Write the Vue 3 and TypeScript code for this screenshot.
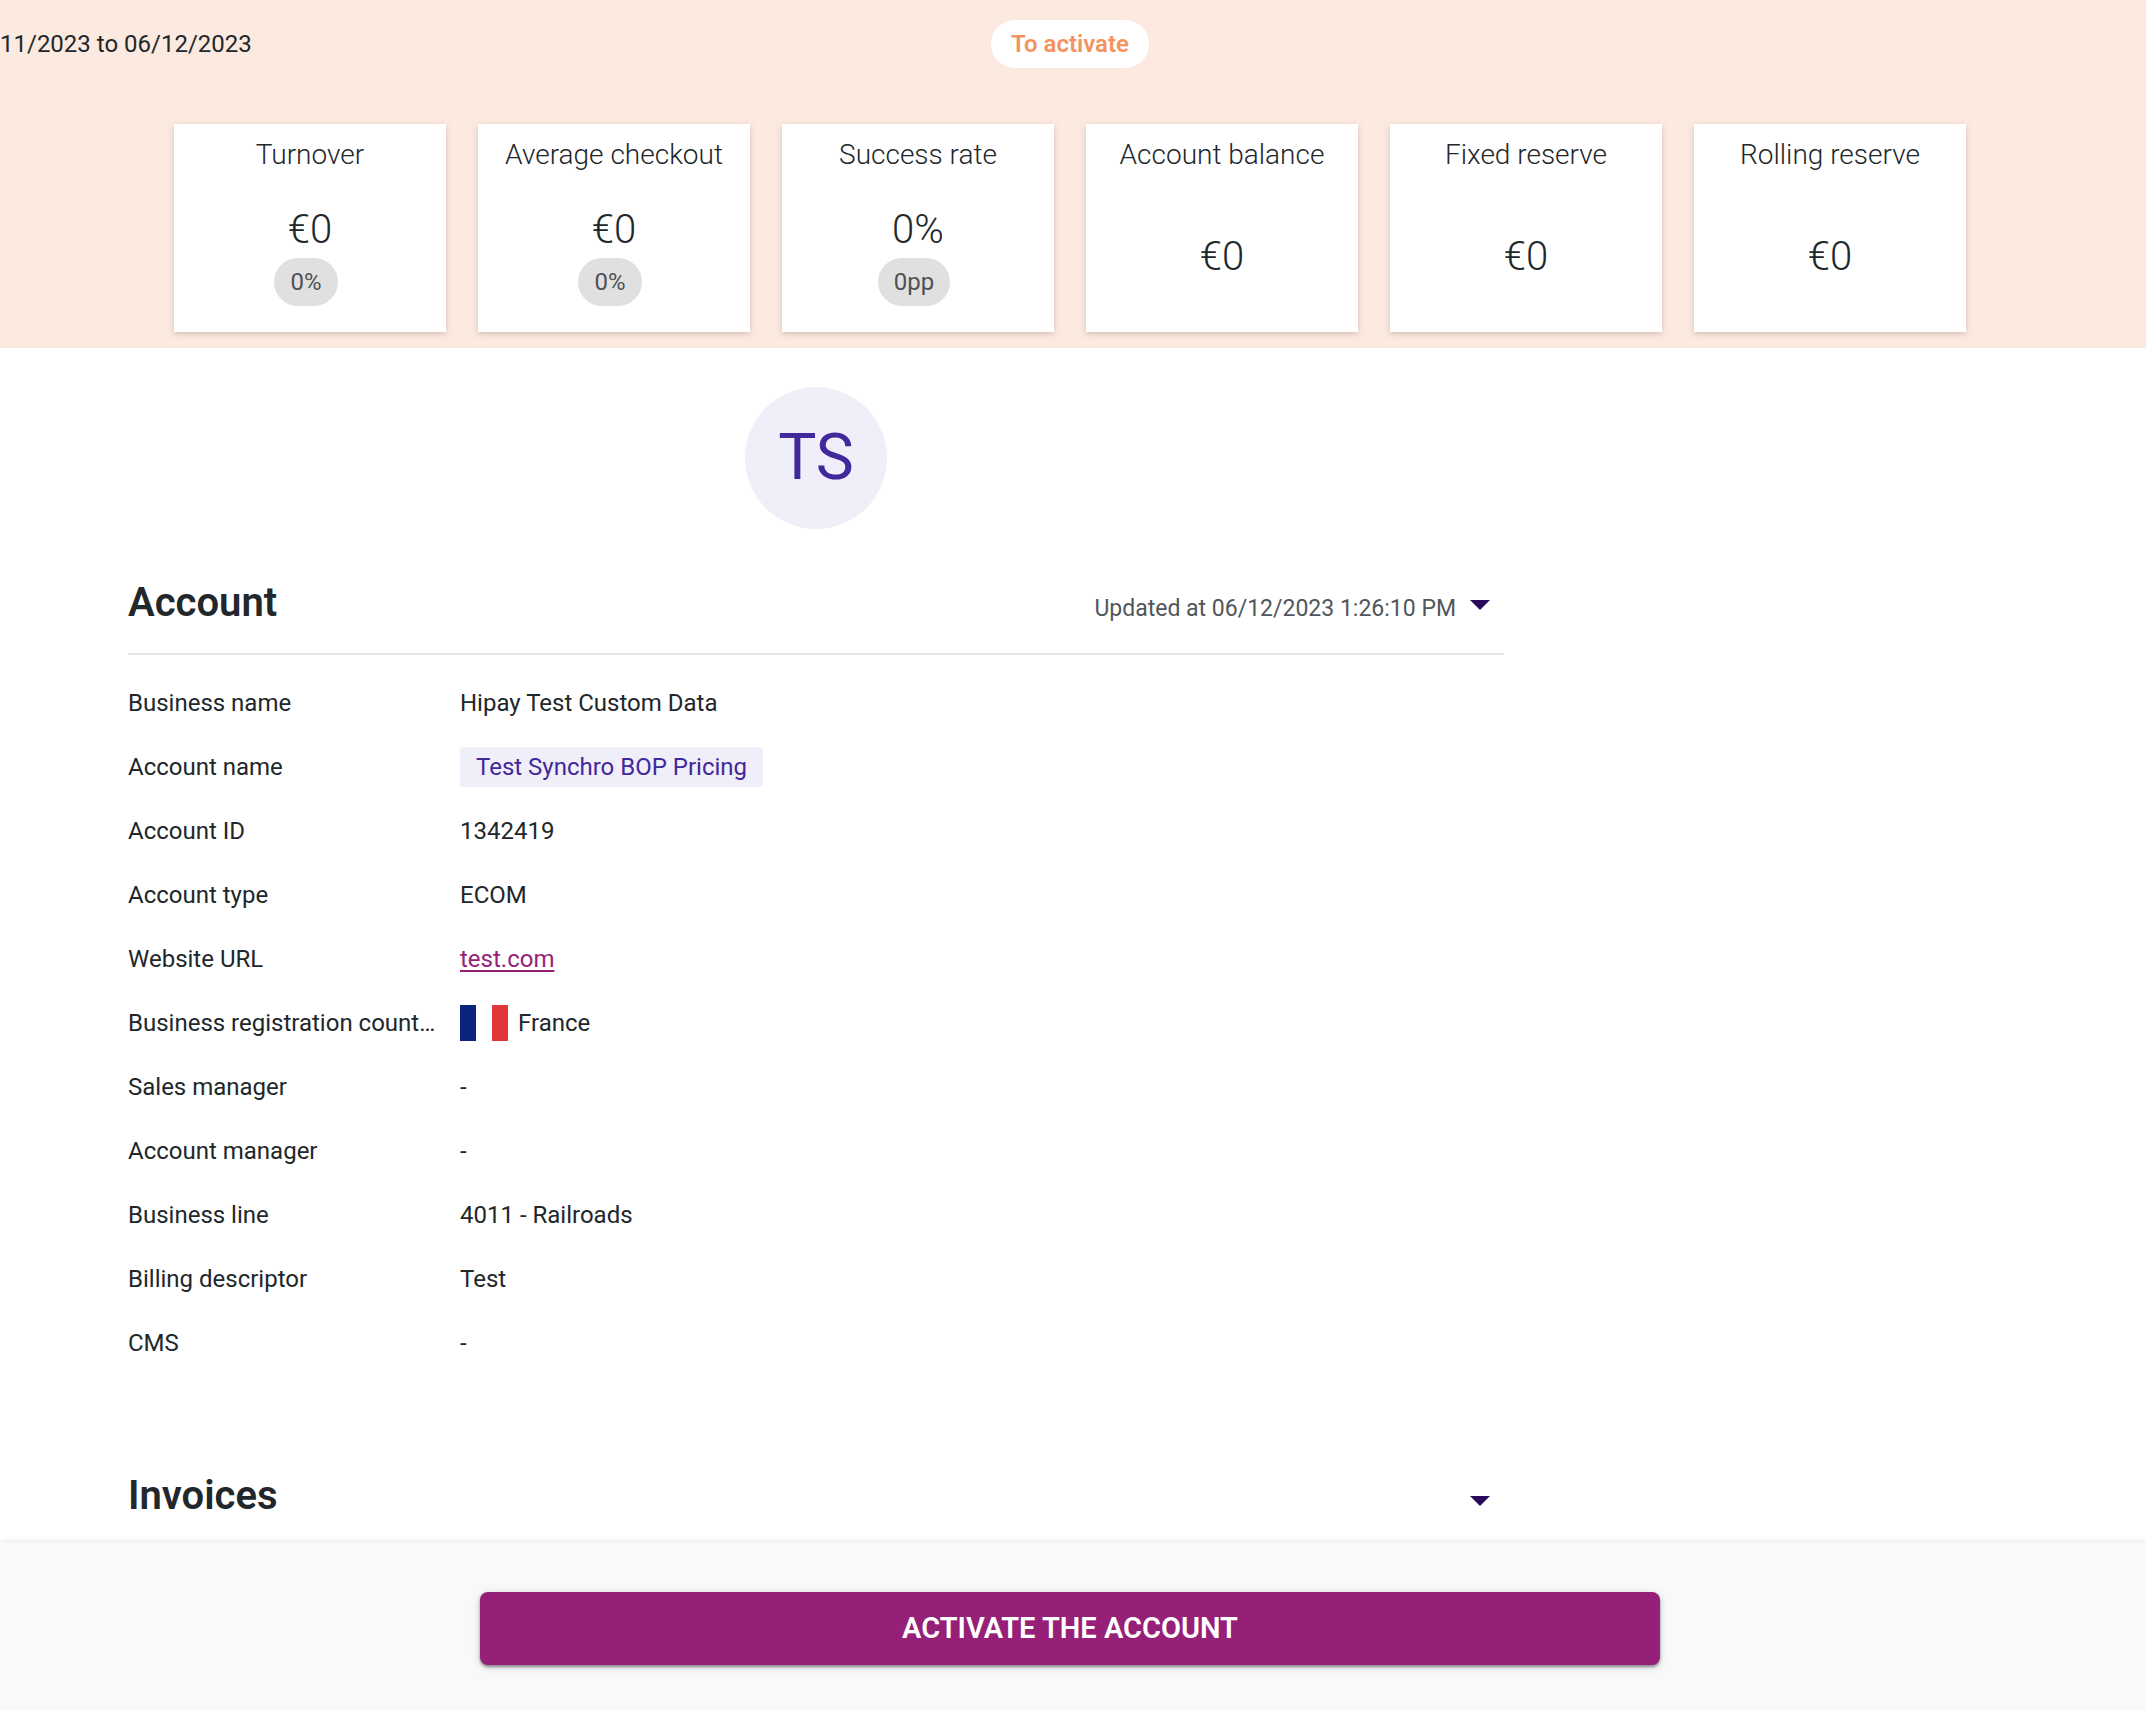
<script setup lang="ts">
interface Stat {
  title: string
  value: string
  delta?: string
}

interface Field {
  label: string
  value: string
  kind?: 'chip' | 'link' | 'country'
}

const stats: Stat[] = [
  { title: 'Turnover', value: '€0', delta: '0%' },
  { title: 'Average checkout', value: '€0', delta: '0%' },
  { title: 'Success rate', value: '0%', delta: '0pp' },
  { title: 'Account balance', value: '€0' },
  { title: 'Fixed reserve', value: '€0' },
  { title: 'Rolling reserve', value: '€0' },
]

const fields: Field[] = [
  { label: 'Business name', value: 'Hipay Test Custom Data' },
  { label: 'Account name', value: 'Test Synchro BOP Pricing', kind: 'chip' },
  { label: 'Account ID', value: '1342419' },
  { label: 'Account type', value: 'ECOM' },
  { label: 'Website URL', value: 'test.com', kind: 'link' },
  { label: 'Business registration country', value: 'France', kind: 'country' },
  { label: 'Sales manager', value: '-' },
  { label: 'Account manager', value: '-' },
  { label: 'Business line', value: '4011 - Railroads' },
  { label: 'Billing descriptor', value: 'Test' },
  { label: 'CMS', value: '-' },
]
</script>

<template>
  <div class="page">
    <header class="summary">
      <div class="summary-bar">
        <span class="period">11/2023 to 06/12/2023</span>
        <span class="status">To activate</span>
      </div>
      <div class="stats">
        <article v-for="stat in stats" :key="stat.title" class="stat">
          <h3 class="stat-title">{{ stat.title }}</h3>
          <div class="stat-body">
            <span class="stat-value">{{ stat.value }}</span>
            <span v-if="stat.delta" class="stat-delta">{{ stat.delta }}</span>
          </div>
        </article>
      </div>
    </header>

    <main class="content">
      <div class="avatar">TS</div>

      <section class="panel">
        <div class="panel-head">
          <h2 class="panel-title">Account</h2>
          <span class="updated">Updated at 06/12/2023 1:26:10 PM</span>
          <button class="toggle" type="button" aria-label="Toggle account">
            <svg width="20" height="10" viewBox="0 0 20 10"><path d="M0 0h20L10 10z" fill="#2a0a5e" /></svg>
          </button>
        </div>
        <dl class="fields">
          <div v-for="field in fields" :key="field.label" class="field">
            <dt class="label">{{ field.label }}</dt>
            <dd class="value">
              <span v-if="field.kind === 'chip'" class="chip">{{ field.value }}</span>
              <a v-else-if="field.kind === 'link'" class="link" href="#">{{ field.value }}</a>
              <template v-else-if="field.kind === 'country'">
                <svg class="flag" width="48" height="36" viewBox="0 0 48 36">
                  <rect width="16" height="36" fill="#0b2479" />
                  <rect x="16" width="16" height="36" fill="#ffffff" />
                  <rect x="32" width="16" height="36" fill="#e1373a" />
                </svg>
                {{ field.value }}
              </template>
              <template v-else>{{ field.value }}</template>
            </dd>
          </div>
        </dl>
      </section>

      <section class="panel">
        <div class="panel-head panel-head-closed">
          <h2 class="panel-title">Invoices</h2>
          <button class="toggle" type="button" aria-label="Toggle invoices">
            <svg width="20" height="10" viewBox="0 0 20 10"><path d="M0 0h20L10 10z" fill="#2a0a5e" /></svg>
          </button>
        </div>
      </section>
    </main>

    <footer class="actions">
      <button class="activate" type="button">ACTIVATE THE ACCOUNT</button>
    </footer>
  </div>
</template>

<style>
body {
  background: #ffffff;
}
</style>

<style scoped>
.page {
  display: flex;
  flex-direction: column;
  min-height: 100vh;
  color: #21272a;
  font-family: Roboto, "Liberation Sans", sans-serif;
  font-size: 24px;
  line-height: 32px;
}

.summary {
  padding: 20px 6px 16px 0;
  background: #fce9df;
}

.summary-bar {
  display: grid;
  grid-template-columns: 1fr auto 1fr;
  align-items: center;
}

.status {
  padding: 8px 20px;
  border-radius: 24px;
  background: #ffffff;
  color: #f4935f;
  font-weight: 600;
}

.stats {
  display: grid;
  grid-template-columns: repeat(6, 1fr);
  gap: 32px;
  margin: 56px 174px 0;
}

.stat {
  display: flex;
  flex-direction: column;
  box-sizing: border-box;
  min-height: 208px;
  padding: 15px 16px 26px;
  background: #ffffff;
  box-shadow: 0 2px 8px rgba(0, 0, 0, 0.12), 0 2px 3px rgba(0, 0, 0, 0.06);
  text-align: center;
}

.stat-title {
  margin: 0;
  font-size: 28px;
  font-weight: 300;
  line-height: 32px;
  white-space: nowrap;
}

.stat-body {
  display: flex;
  flex: 1;
  flex-direction: column;
  align-items: center;
  justify-content: flex-end;
}

.stat-value {
  font-size: 40px;
  font-weight: 300;
  line-height: 56px;
}

.stat-value:last-child {
  margin-bottom: 21px;
}

.stat-delta {
  margin-right: 8px;
  padding: 8px 16px;
  border-radius: 24px;
  background: #e0e0e0;
  color: #4d5256;
}

.content {
  flex: 1;
  width: 100%;
  max-width: 1376px;
  margin-left: 128px;
}

.avatar {
  display: flex;
  align-items: center;
  justify-content: center;
  width: 142px;
  height: 142px;
  margin: 39px auto 42px;
  border-radius: 50%;
  background: #f0eef8;
  color: #41289b;
  font-size: 64px;
}

.panel-head {
  display: flex;
  align-items: center;
  padding: 8px 14px 26px 0;
  border-bottom: 2px solid #e4e6e6;
}

.panel-head-closed {
  padding-bottom: 0;
  border-bottom: 0;
}

.panel-title {
  flex: 1;
  margin: 0;
  font-size: 40px;
  font-weight: 600;
  line-height: 48px;
}

.updated {
  padding-top: 12px;
  color: #51565a;
  font-size: 23px;
}

.toggle {
  display: flex;
  margin-left: 14px;
  padding: 4px 0 0;
  border: 0;
  background: none;
}

.panel-head-closed .toggle {
  padding-top: 10px;
}

.fields {
  margin: 16px 0 89px;
}

.field {
  display: grid;
  grid-template-columns: 310px 1fr;
  gap: 22px;
  align-items: center;
  height: 64px;
}

.label {
  overflow: hidden;
  text-overflow: ellipsis;
  white-space: nowrap;
}

.value {
  display: flex;
  align-items: center;
  gap: 10px;
  margin: 0;
}

.chip {
  padding: 4px 16px;
  border-radius: 4px;
  background: #f0eef8;
  color: #41289b;
}

.link {
  color: #961f77;
  text-decoration-thickness: 2px;
  text-underline-offset: 3px;
}

.actions {
  display: flex;
  justify-content: center;
  padding: 50px 6px 45px 0;
  background: #f8f9fb;
  box-shadow: 0 0 6px rgba(0, 0, 0, 0.14);
}

.activate {
  width: 100%;
  max-width: 1180px;
  padding: 20px 32px;
  border: 0;
  border-radius: 8px;
  background: #961f77;
  box-shadow: 0 2px 3px rgba(0, 0, 0, 0.4), 0 2px 10px rgba(0, 0, 0, 0.14);
  color: #ffffff;
  font-family: inherit;
  font-size: 29px;
  font-weight: 600;
  line-height: 33px;
}
</style>
